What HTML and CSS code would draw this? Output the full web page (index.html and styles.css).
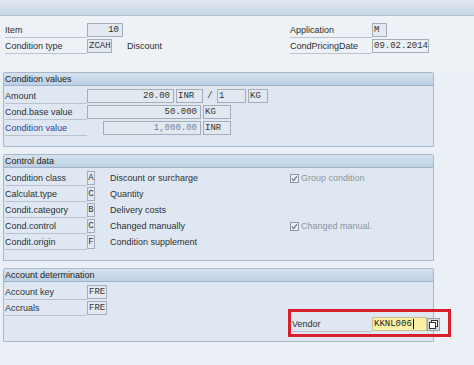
FILE: index.html
```html
<!DOCTYPE html>
<html lang="en">
<head>
  <meta charset="UTF-8">
  <title>Condition details</title>
  <link rel="stylesheet" href="styles.css">
</head>
<body>

  <div class="topbar"></div>

  <div class="head">
    <div class="col">
      <div class="row"><span class="lbl">Item</span><span class="fld num w36">10</span></div>
      <div class="row"><span class="lbl">Condition type</span><span class="fld w25">ZCAH</span><span class="txt gap15">Discount</span></div>
    </div>
    <div class="col">
      <div class="row"><span class="lbl">Application</span><span class="fld w15">M</span></div>
      <div class="row"><span class="lbl">CondPricingDate</span><span class="fld w57 light">09.02.2014</span></div>
    </div>
  </div>

  <!-- Condition values -->
  <div class="panel first">
    <div class="panel-head">Condition values</div>
    <div class="panel-body">
      <div class="row">
        <span class="lbl">Amount</span>
        <span class="fld num w87">20.00</span>
        <span class="fld w27 ml2">INR</span>
        <span class="slash">/</span>
        <span class="fld w29">1</span>
        <span class="fld w20 ml2">KG</span>
      </div>
      <div class="row">
        <span class="lbl">Cond.base value</span>
        <span class="fld num w114">50.000</span>
        <span class="fld w28 ml2">KG</span>
      </div>
      <div class="row">
        <span class="lbl blue">Condition value</span>
        <span class="fld num w98 ml16 value">1,000.00</span>
        <span class="fld w28 ml2">INR</span>
      </div>
    </div>
  </div>

  <!-- Control data -->
  <div class="panel">
    <div class="panel-head">Control data</div>
    <div class="panel-body">
      <div class="crow">
        <span class="lbl">Condition class</span><span class="fld w8">A</span><span class="txt">Discount or surcharge</span>
        <span class="chk"><svg width="9" height="9" viewBox="0 0 9 9"><rect x="0.5" y="0.5" width="8" height="8" fill="#eef2f6" stroke="#8d98a3"/><path d="M2 4.5 L3.8 6.5 L7 2.2" fill="none" stroke="#6f7a85" stroke-width="1.3"/></svg>Group condition</span>
      </div>
      <div class="crow">
        <span class="lbl">Calculat.type</span><span class="fld w8">C</span><span class="txt">Quantity</span>
      </div>
      <div class="crow">
        <span class="lbl">Condit.category</span><span class="fld w8">B</span><span class="txt">Delivery costs</span>
      </div>
      <div class="crow">
        <span class="lbl">Cond.control</span><span class="fld w8">C</span><span class="txt">Changed manually</span>
        <span class="chk"><svg width="9" height="9" viewBox="0 0 9 9"><rect x="0.5" y="0.5" width="8" height="8" fill="#eef2f6" stroke="#8d98a3"/><path d="M2 4.5 L3.8 6.5 L7 2.2" fill="none" stroke="#6f7a85" stroke-width="1.3"/></svg>Changed manual.</span>
      </div>
      <div class="crow">
        <span class="lbl">Condit.origin</span><span class="fld w8">F</span><span class="txt">Condition supplement</span>
      </div>
    </div>
  </div>

  <!-- Account determination -->
  <div class="panel last">
    <div class="panel-head">Account determination</div>
    <div class="panel-body">
      <div class="row"><span class="lbl">Account key</span><span class="fld w20">FRE</span></div>
      <div class="row"><span class="lbl">Accruals</span><span class="fld w20">FRE</span></div>
      <div class="row vendor">
        <span class="lbl w80">Vendor</span>
        <span class="fld edit w55">KKNL006<i class="cursor"></i></span>
        <span class="f4btn"><svg width="13" height="13" viewBox="0 0 13 13"><rect x="0.5" y="0.5" width="12" height="12" fill="#d6dbe0" stroke="#9aa3ac"/><rect x="4.5" y="2.5" width="6" height="6" fill="#fff" stroke="#333"/><rect x="2.5" y="4.5" width="6" height="6" fill="#fff" stroke="#333"/></svg></span>
        <div class="mark"></div>
      </div>
    </div>
  </div>

</body>
</html>
```

FILE: styles.css
```css
/* Base */
* {
  margin: 0;
  padding: 0;
  box-sizing: border-box;
}

body {
  background: #eaf0f6;
  font-family: 'Liberation Sans', Arial, sans-serif;
  font-size: 9px;
  color: #2b2f33;
  width: 474px;
  height: 365px;
  overflow: hidden;
}

.topbar {
  height: 16px;
  background: linear-gradient(#e2e9f1, #c7d6e6);
  border-bottom: 1px solid #b3c4d6;
}

/* Header fields */
.head {
  display: flex;
  padding: 6px 0 0 5px;
  background: #eef2f7;
  height: 56px;
}

.head .col {
  flex-shrink: 0;
}

.head .col:first-child {
  width: 285px;
}

.row {
  display: flex;
  align-items: center;
  height: 16px;
}

.lbl {
  width: 82px;
  height: 15px;
  line-height: 15px;
  border-bottom: 1px solid #b9c3ce;
  white-space: nowrap;
  flex-shrink: 0;
}

.lbl.blue {
  color: #2d3f98;
}

.lbl.w80 {
  width: 80px;
}

.fld {
  height: 14px;
  line-height: 12px;
  border: 1px solid #a4aeb8;
  background: #e2e9f0;
  font-family: 'Liberation Mono', 'Courier New', monospace;
  font-size: 9px;
  color: #333;
  padding: 0 1px;
  white-space: nowrap;
  overflow: hidden;
  flex-shrink: 0;
}

.fld.light {
  background: #edf1f5;
}

.fld.num {
  text-align: right;
  padding-right: 3px;
}

.fld.value {
  color: #6a85a8;
}

.fld.w8 { width: 8px; padding: 0; text-align: center; }
.fld.w15 { width: 15px; }
.fld.w20 { width: 20px; }
.fld.w25 { width: 25px; }
.fld.w27 { width: 27px; }
.fld.w28 { width: 28px; }
.fld.w29 { width: 29px; }
.fld.w36 { width: 36px; }
.fld.w55 { width: 55px; }
.fld.w57 { width: 57px; }
.fld.w87 { width: 87px; }
.fld.w98 { width: 98px; }
.fld.w114 { width: 114px; }

.ml2 { margin-left: 2px; }
.ml16 { margin-left: 16px; }

.slash {
  width: 14px;
  text-align: center;
  font-family: 'Liberation Mono', monospace;
  font-size: 9px;
}

.txt {
  white-space: nowrap;
}

.gap15 {
  margin-left: 15px;
}

/* Panels */
.panel {
  width: 431px;
  margin: 0 0 0 3px;
  border: 1px solid #a9b8c8;
  border-radius: 2px 2px 0 0;
  background: #dfe8f2;
}

.panel + .panel {
  margin-top: 7px;
}

.panel-head {
  height: 13px;
  line-height: 12px;
  padding-left: 1px;
  background: linear-gradient(#d6e2ee, #bdd0e4);
  border-bottom: 1px solid #9fb3c8;
  color: #222;
}

.panel-body {
  padding: 2px 0 10px 1px;
}

.panel.last .panel-body {
  padding-bottom: 9px;
}

.crow {
  display: grid;
  grid-template-columns: 82px 23px 180px 1fr;
  align-items: center;
  height: 16px;
}

.chk {
  display: flex;
  align-items: center;
  gap: 2px;
  color: #8a949e;
  white-space: nowrap;
}

/* Vendor */
.vendor {
  position: relative;
  margin-left: 287px;
}

.fld.edit {
  background: #fbf1a6;
  border-color: #c9c193;
  color: #222;
  position: relative;
}

.cursor {
  display: inline-block;
  width: 1px;
  height: 10px;
  background: #111;
  vertical-align: middle;
  margin-left: 1px;
}

.f4btn {
  display: flex;
  width: 13px;
  height: 13px;
}

.mark {
  position: absolute;
  left: -4px;
  top: -7px;
  width: 163px;
  height: 28px;
  border: 3px solid #d81f2a;
}
```
